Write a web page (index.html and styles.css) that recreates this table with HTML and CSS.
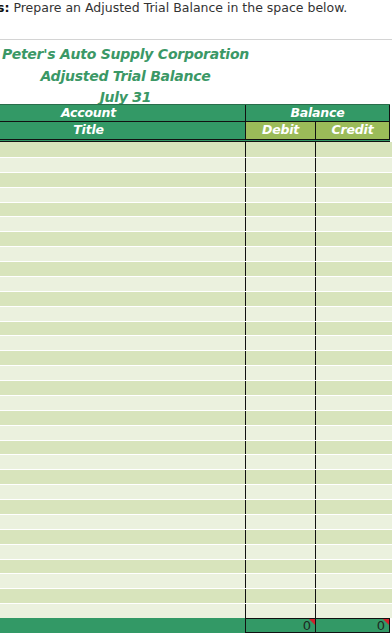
FILE: index.html
```html
<!DOCTYPE html>
<html>
<head>
<meta charset="utf-8">
<link rel="stylesheet" href="styles.css">
</head>
<body>
<div class="instr"><span class="instr-text"><b>s:</b> Prepare an Adjusted Trial Balance in the space below.</span></div>
<div class="title">
  <div class="t-line">Peter's Auto Supply Corporation</div>
  <div class="t-line">Adjusted Trial Balance</div>
  <div class="t-line t-date">July 31</div>
</div>
<div class="sheet">
  <div class="hrow1">
    <div class="hc hc-acc">Account</div>
    <div class="hc hc-bal">Balance</div>
  </div>
  <div class="hrow2">
    <div class="hc hc-acc">Title</div>
    <div class="hc hc-sub hc-deb">Debit</div>
    <div class="hc hc-sub hc-cred">Credit</div>
  </div>
  <div class="rows" id="rows"></div>
  <div class="total">
    <div class="tc tc-acc"></div>
    <div class="tc tc-num">0<span class="flag"></span></div>
    <div class="tc tc-num">0<span class="flag"></span></div>
  </div>
</div>
<script>
  var r = document.getElementById('rows');
  for (var i = 0; i < 32; i++) {
    var d = document.createElement('div');
    d.className = 'row ' + (i % 2 === 0 ? 'dark' : 'light');
    d.innerHTML = '<div class="c c-acc"></div><div class="c c-deb"></div><div class="c c-cred"></div>';
    r.appendChild(d);
  }
</script>
</body>
</html>
```
FILE: styles.css
```css
html, body {
  margin: 0;
  padding: 0;
  background: #ffffff;
  overflow: hidden;
}
body {
  width: 392px;
  height: 634px;
  font-family: "DejaVu Sans", "Liberation Sans", sans-serif;
}
.instr {
  height: 40px;
  border-bottom: 1px solid #d4d4d4;
  box-sizing: border-box;
}
.instr-text {
  display: block;
  margin-left: -3px;
  font-size: 12.5px;
  line-height: 16px;
  color: #333333;
  white-space: nowrap;
}
.instr-text b {
  color: #111;
}
.title {
  width: 251px;
  height: 64px;
  overflow: hidden;
  text-align: center;
  color: #3b9866;
  font-weight: bold;
  font-style: italic;
  font-size: 14px;
  letter-spacing: -0.25px;
  white-space: nowrap;
}
.t-line {
  height: 21.5px;
  line-height: 21.5px;
}
.t-line:first-child {
  margin-top: 4px;
}
.sheet {
  width: 390px;
}
.hrow1 {
  display: grid;
  grid-template-columns: 245px 145px;
  height: 18px;
  box-sizing: border-box;
  border-top: 1px solid #2a6e4b;
  border-bottom: 1px solid #111;
  background: #339966;
}
.hrow2 {
  display: grid;
  grid-template-columns: 245px 70px 75px;
  height: 20px;
  box-sizing: border-box;
  border-bottom: 3px double #111;
  background: #339966;
}
.hc {
  color: #ffffff;
  font-weight: bold;
  font-style: italic;
  font-size: 12.5px;
  line-height: 16px;
  text-align: center;
  box-sizing: border-box;
  letter-spacing: -0.2px;
}
.hc-acc {
  padding-right: 68px;
}
.hc-bal {
  border-left: 1px solid #111;
  border-right: 1px solid #111;
}
.hc-sub {
  background: #9bbb59;
  border-left: 1px solid #111;
}
.hc-cred {
  border-right: 1px solid #111;
}
.rows {
  display: flex;
  flex-direction: column;
}
.row {
  display: grid;
  grid-template-columns: 245px 70px 77px;
  width: 392px;
  height: 14.875px;
  box-sizing: border-box;
}
.row + .row {
  border-top: 1px solid #ffffff;
}
.row.dark { background: #d8e4bc; }
.row.light { background: #ebf1de; }
.c-deb, .c-cred {
  border-left: 1px solid #111;
}
.total {
  display: grid;
  grid-template-columns: 245px 70px 75px;
  height: 15px;
  background: #339966;
  box-sizing: border-box;
}
.tc {
  box-sizing: border-box;
  position: relative;
}
.tc-num {
  border: 1px solid #111;
  border-right: none;
  text-align: right;
  padding-right: 4px;
  font-family: "DejaVu Sans", sans-serif;
  font-size: 13px;
  line-height: 13px;
  color: #1e2a22;
}
.tc-num:last-child {
  border-right: 1px solid #111;
}
.flag {
  position: absolute;
  top: 0;
  right: 0;
  width: 0;
  height: 0;
  border-top: 6px solid #d0202a;
  border-left: 6px solid transparent;
}
```
